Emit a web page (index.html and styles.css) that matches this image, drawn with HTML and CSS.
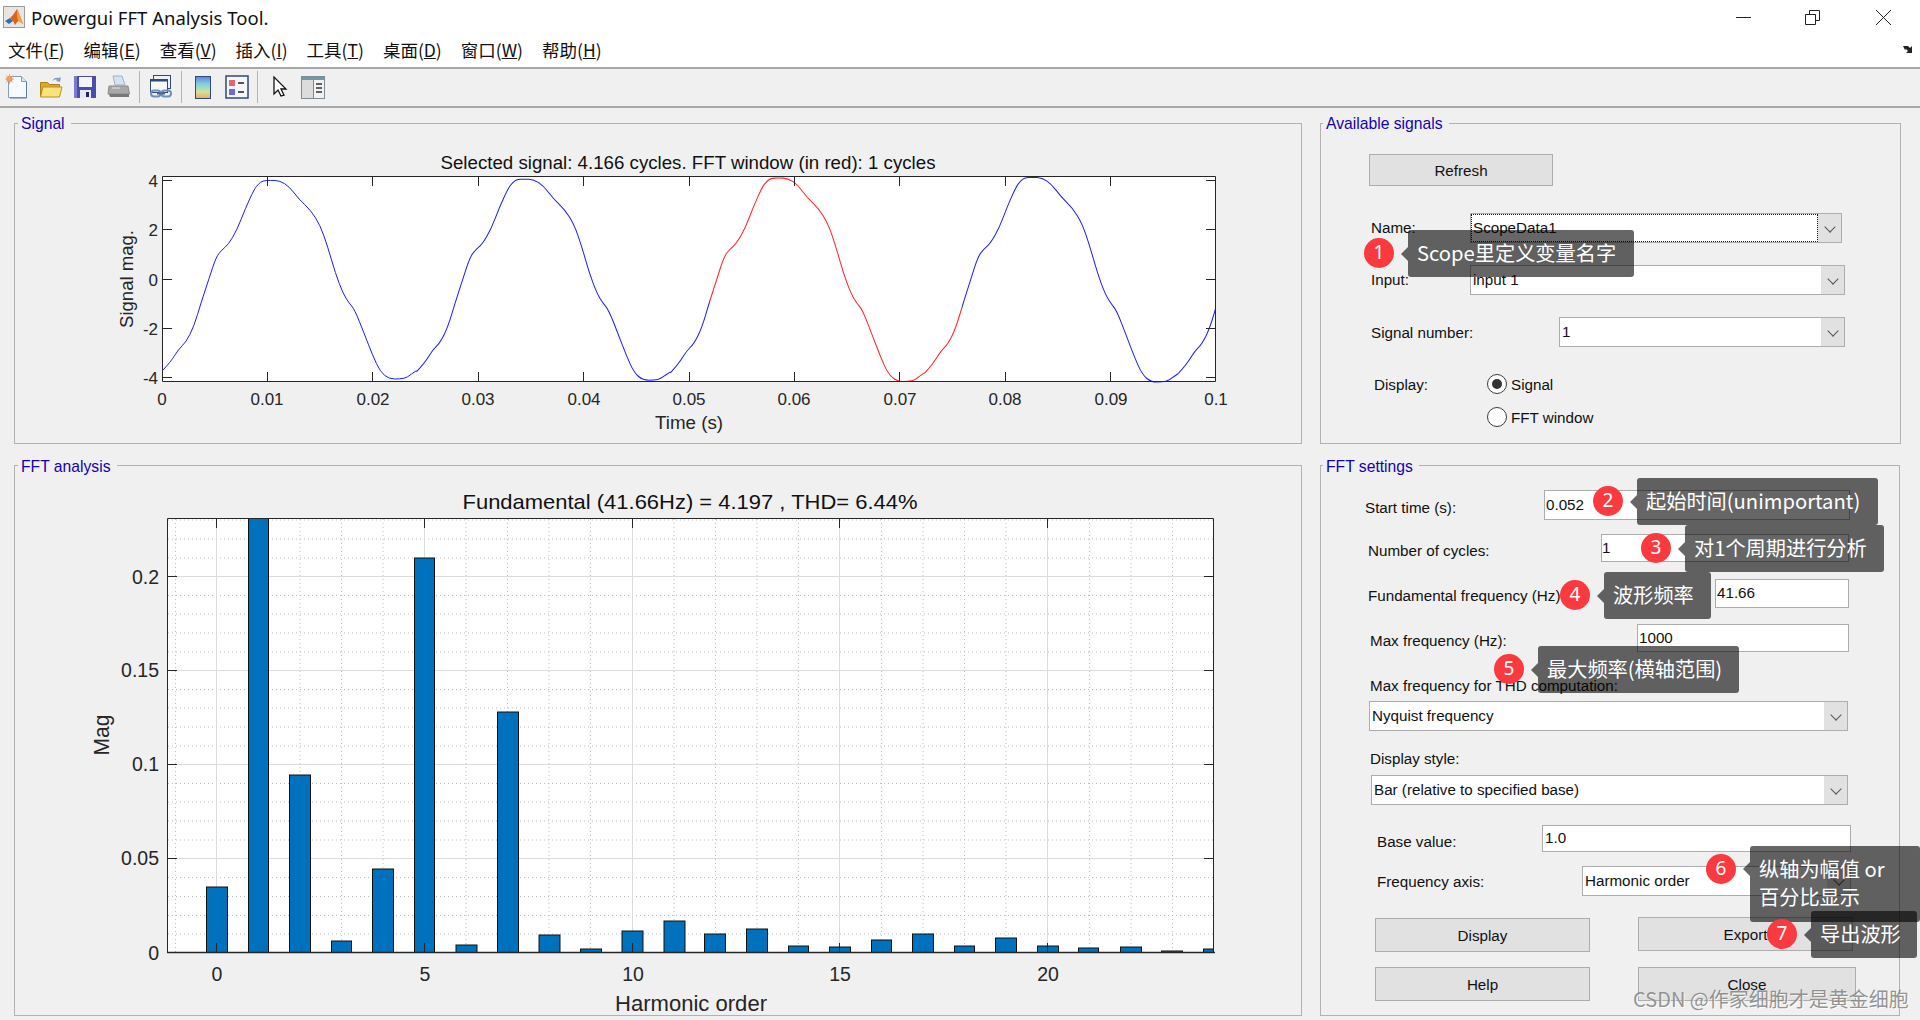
FILE: index.html
```html
<!DOCTYPE html>
<html lang="zh">
<head>
<meta charset="utf-8">
<title>Powergui FFT Analysis Tool.</title>
<link rel="stylesheet" href="styles.css">
</head>
<body>
<div class="app">
  <header class="titlebar">
    <svg class="app-icon" viewBox="0 0 22 22"><rect x="0.5" y="0.5" width="21" height="21" fill="#e6e6e6" stroke="#9a9a9a"/><path d="M2 15l5-3 3 3-4 3z" fill="#2f6db5"/><path d="M7 12l3-3 4-6c2 3 4 10 6 15-2-1-3-3-5-3-1 1-2 3-3 4-1-2-2-5-5-7z" fill="#d9641c"/><path d="M14 3c2 3 4 10 6 15-2-1-3-3-5-3-1-4-1-8-1-12z" fill="#f0a33a"/></svg>
    <span class="app-title">Powergui FFT Analysis Tool.</span>
    <div class="winbtns">
      <svg class="win-min" viewBox="0 0 15 1"><path d="M0 .5h15" stroke="#222"/></svg>
      <svg class="win-max" viewBox="0 0 15 15"><path d="M.5 4.5h10v10H.5zM4.5 4.5V.5h10v10h-4" fill="none" stroke="#222"/></svg>
      <svg class="win-close" viewBox="0 0 15 15"><path d="M0 0l15 15M15 0L0 15" stroke="#222"/></svg>
    </div>
  </header>
  <nav class="menubar">
    <span>文件(<u>F</u>)</span><span>编辑(<u>E</u>)</span><span>查看(<u>V</u>)</span><span>插入(<u>I</u>)</span><span>工具(<u>T</u>)</span><span>桌面(<u>D</u>)</span><span>窗口(<u>W</u>)</span><span>帮助(<u>H</u>)</span>
    <svg class="dock" viewBox="0 0 12 9"><path d="M1 1h5l2 2 2-2v7H4l2-2-2-2-1 1z" fill="#222"/></svg>
  </nav>
  <div class="toolbar">
    <span class="tool"><svg viewBox="0 0 24 26"><path d="M3.5 2.5h13l5 5v16h-18z" fill="#f7fbff" stroke="#7f9dc4"/><path d="M16.5 2.5v5h5" fill="#d8e6f5" stroke="#7f9dc4"/><path d="M21.5 8v16H5" fill="none" stroke="#5b7aa6"/><circle cx="4.5" cy="5" r="3" fill="#f08a3c"/><path d="M4.500 0v10M0 5h9M1 1.500l7 7M8 1.500l-7 7" stroke="#f3a36a"/></svg></span>
    <span class="tool"><svg viewBox="0 0 24 26"><path d="M1.500 8.500h7l2 2h10v12h-19z" fill="#d9a92c" stroke="#a9801a"/><path d="M1.500 23l2.500-10h19l-2.500 10z" fill="#fbe27f" stroke="#b8901f"/><path d="M13 8c1-4 4-5 7-4l2-1-1 5-4-1 1-1c-2-1-4 0-5 2z" fill="#7f9dc4"/></svg></span>
    <span class="tool"><svg viewBox="0 0 24 26"><rect x="1" y="2" width="22" height="22" fill="#4c4cb0"/><rect x="1" y="2" width="3" height="22" fill="#7a7ad0"/><rect x="6" y="3" width="13" height="10" fill="#f4f4f8"/><rect x="7" y="16" width="11" height="8" fill="#e8e8ee"/><rect x="13" y="18" width="3" height="5" fill="#23235e"/></svg></span>
    <span class="tool"><svg viewBox="0 0 24 26"><path d="M6 2h9l3 9H8z" fill="#d6e2ee" stroke="#9fb3c6"/><path d="M2 12h19l1.500 8H1z" fill="#a8a8a8" stroke="#8a8a8a"/><path d="M2 20h20v3H3z" fill="#777"/><path d="M5 14h8" stroke="#e2e2e2"/></svg></span>
    <i class="sep"></i>
    <span class="tool"><svg viewBox="0 0 24 26"><rect x="4.500" y="1.500" width="17" height="13" fill="#eef2f8" stroke="#2e4a78"/><rect x="1.500" y="5.500" width="17" height="13" fill="#f6f8fb" stroke="#2e4a78"/><path d="M1.500 6.500h17" stroke="#2e4a78" stroke-width="2"/><rect x="2" y="16.500" width="9.500" height="6" rx="3" fill="none" stroke="#6e8fb7" stroke-width="2"/><rect x="12.500" y="16.500" width="9.500" height="6" rx="3" fill="none" stroke="#6e8fb7" stroke-width="2"/><path d="M8 19.500h8" stroke="#4a6c9a" stroke-width="2"/></svg></span>
    <i class="sep"></i>
    <span class="tool"><svg viewBox="0 0 24 26"><defs><linearGradient id="cbar" x1="0" y1="0" x2="0" y2="1"><stop offset="0" stop-color="#6a7ee0"/><stop offset=".35" stop-color="#7fd4d8"/><stop offset=".7" stop-color="#cfe2a0"/><stop offset="1" stop-color="#f0a860"/></linearGradient></defs><rect x="4.500" y="2.500" width="15" height="22" fill="url(#cbar)" stroke="#2e4a78"/></svg></span>
    <span class="tool"><svg viewBox="0 0 24 26"><rect x="1" y="2" width="22" height="22" fill="#f4f6fa" stroke="#2e4a78" stroke-width="1.500"/><rect x="4" y="6" width="6" height="6" fill="#e8666a"/><rect x="4" y="15" width="6" height="6" fill="#6a6ae0"/><path d="M13 9h6M13 18h6" stroke="#222" stroke-width="1.500"/></svg></span>
    <i class="sep"></i>
    <span class="tool tool-cursor"><svg viewBox="0 0 24 26"><path d="M6 3v17l4-4 3 6 3-1-3-6h5z" fill="#fff" stroke="#111" stroke-width="1.300"/></svg></span>
    <span class="tool"><svg viewBox="0 0 24 26"><rect x="0.500" y="2.500" width="23" height="22" fill="#f2f2f2" stroke="#7e8a94"/><rect x="1" y="3" width="22" height="3" fill="#6d98ad"/><rect x="1" y="6" width="11" height="18" fill="#dcdcdc"/><path d="M12.500 6v18" stroke="#7e8a94"/><path d="M15 10h6M15 14h6M15 18h6" stroke="#333" stroke-width="1.500"/></svg></span>
  </div>

  <main class="workspace">
    <section class="panel panel-signal">
      <h2 class="panel-title">Signal</h2>
      <svg class="chart chart-signal" viewBox="100 150 1190 290">
        <defs>
          <path id="wave" d="M0 370.7Q8.4 361.7 12.25 355.5Q16.1 349.3 19.9 345.65Q23.7 342 27.55 334.35Q31.4 326.7 35.2 314.2Q39 301.7 42.85 290Q46.7 278.3 50.15 267.8Q53.6 257.3 56.45 253.65Q59.3 250 62.55 247.35Q65.8 244.7 70.2 237.35Q74.6 230 78.8 219.15Q83 208.3 87.4 198.8Q91.8 189.3 93.9 186.65Q96 184 98.15 182.35Q100.3 180.7 104.1 180.5Q107.9 180.3 112.7 180.5Q117.5 180.7 122.25 183.7Q127 186.7 131.8 193Q136.6 199.3 142.35 204.65Q148.1 210 152.9 217.5Q157.7 225 161.5 235.85Q165.3 246.7 169.15 260Q173 273.3 176.8 283.3Q180.6 293.3 183.5 298Q186.4 302.7 189.25 306Q192.1 309.3 196.9 321.3Q201.7 333.3 205.9 344.15Q210.1 355 213.95 363.35Q217.8 371.7 222.2 375.35Q226.6 379 232.3 379Q238 379 241.5 378.25Q245 377.5 248.95 374.1L254 370.7"/>
          <clipPath id="clip-blue"><rect x="162.500" y="175" width="547.500" height="208"/><rect x="962" y="175" width="254" height="208"/></clipPath>
          <clipPath id="clip-red"><rect x="710" y="175" width="252" height="208"/></clipPath>
          <g id="waves">
            <use href="#wave" transform="translate(162.400 0)"/>
            <use href="#wave" transform="translate(416.400 279) scale(1 1.012) translate(0 -279)"/>
            <use href="#wave" transform="translate(670.400 279) scale(1 1.024) translate(0 -279)"/>
            <use href="#wave" transform="translate(924.400 279) scale(1 1.03) translate(0 -279)"/>
            <use href="#wave" transform="translate(1178.400 279) scale(1 1.03) translate(0 -279)"/>
          </g>
        </defs>
        <rect class="plot-bg" x="162.500" y="176.500" width="1053" height="205"/>
        <g class="wave-blue" clip-path="url(#clip-blue)"><use href="#waves"/></g>
        <g class="wave-red" clip-path="url(#clip-red)"><use href="#waves"/></g>
        <path class="axis" d="M162.500 176.500H1215.500V381.500H162.500Z"/>
        <path class="axis" d="M267.500 177v9M372.500 177v9M478.500 177v9M583.500 177v9M689.500 177v9M794.500 177v9M899.500 177v9M1005.500 177v9M1110.500 177v9M267.500 381v-9M372.500 381v-9M478.500 381v-9M583.500 381v-9M689.500 381v-9M794.500 381v-9M899.500 381v-9M1005.500 381v-9M1110.500 381v-9M163 180.500h9M163 229.500h9M163 279.500h9M163 328.500h9M163 377.500h9M1215 180.500h-9M1215 229.500h-9M1215 279.500h-9M1215 328.500h-9M1215 377.500h-9"/>
        <text class="t-title-1 mid" x="688" y="169" textLength="495" lengthAdjust="spacingAndGlyphs">Selected signal: 4.166 cycles. FFT window (in red): 1 cycles</text>
        <g class="t-tick-1 end">
          <text x="158" y="187">4</text><text x="158" y="236">2</text><text x="158" y="286">0</text><text x="158" y="335">-2</text><text x="158" y="384">-4</text>
        </g>
        <g class="t-tick-1 mid">
          <text x="162" y="405">0</text><text x="267" y="405">0.01</text><text x="373" y="405">0.02</text><text x="478" y="405">0.03</text><text x="584" y="405">0.04</text><text x="689" y="405">0.05</text><text x="794" y="405">0.06</text><text x="900" y="405">0.07</text><text x="1005" y="405">0.08</text><text x="1111" y="405">0.09</text><text x="1216" y="405">0.1</text>
        </g>
        <text class="t-label-1 mid" x="689" y="429" textLength="68" lengthAdjust="spacingAndGlyphs">Time (s)</text>
        <text class="t-label-1 mid" transform="translate(133 279) rotate(-90)" textLength="98" lengthAdjust="spacingAndGlyphs">Signal mag.</text>
      </svg>
    </section>

    <section class="panel panel-avail">
      <h2 class="panel-title">Available signals</h2>
      <button class="btn btn-refresh">Refresh</button>
      <div class="row row-name">
        <span class="lbl lbl-name">Name:</span>
        <div class="combo combo-name"><span class="combo-text focus">ScopeData1</span><i class="drop"></i></div>
      </div>
      <div class="row row-input">
        <span class="lbl lbl-name">Input:</span>
        <div class="combo combo-input"><span class="combo-text">input 1</span><i class="drop"></i></div>
      </div>
      <div class="row row-input">
        <span class="lbl lbl-num">Signal number:</span>
        <div class="combo combo-num"><span class="combo-text">1</span><i class="drop"></i></div>
      </div>
      <div class="row row-disp">
        <span class="lbl lbl-disp">Display:</span>
        <span class="radio on"></span><span class="radio-label">Signal</span>
      </div>
      <div class="row row-fftw">
        <span class="radio"></span><span class="radio-label">FFT window</span>
      </div>
    </section>

    <section class="panel panel-fft">
      <h2 class="panel-title">FFT analysis</h2>
      <svg class="chart chart-fft" viewBox="70 480 1200 534">
        <defs><clipPath id="clip-bars"><rect x="167.500" y="519" width="1046" height="434"/></clipPath></defs>
        <rect class="plot-bg" x="167.500" y="518.500" width="1046" height="434"/>
        <path class="grid-minor" d="M168 520H1213M168 539H1213M168 558H1213M168 595.500H1213M168 614H1213M168 633H1213M168 652H1213M168 689.500H1213M168 708H1213M168 727H1213M168 746H1213M168 783.500H1213M168 802H1213M168 821H1213M168 840H1213M168 877.500H1213M168 896.500H1213M168 915.500H1213M168 934H1213"/>
        <path class="grid-minor" d="M175.500 519V952M258.500 519V952M300 519V952M341.500 519V952M383 519V952M466 519V952M507.500 519V952M549 519V952M590.500 519V952M674 519V952M715.500 519V952M757 519V952M798.500 519V952M881.500 519V952M923 519V952M964.500 519V952M1006 519V952M1089.500 519V952M1131 519V952M1172.500 519V952"/>
        <path class="grid-major" d="M168 576.500H1213M168 670.500H1213M168 764.500H1213M168 858.500H1213M216.500 519V952M424.500 519V952M632.500 519V952M839.500 519V952M1047.500 519V952"/>
        <g class="bars" clip-path="url(#clip-bars)">
          <rect x="206.500" y="887" width="21" height="66"/>
          <rect x="248.500" y="510" width="20" height="443"/>
          <rect x="289.500" y="775" width="21" height="178"/>
          <rect x="331.500" y="941" width="20" height="12"/>
          <rect x="372.500" y="869" width="21" height="84"/>
          <rect x="414.500" y="558" width="20" height="395"/>
          <rect x="456" y="945" width="21" height="8"/>
          <rect x="497.500" y="712" width="21" height="241"/>
          <rect x="539" y="935" width="21" height="18"/>
          <rect x="580.500" y="949" width="21" height="4"/>
          <rect x="622" y="931" width="21" height="22"/>
          <rect x="664" y="921" width="21" height="32"/>
          <rect x="704.500" y="934" width="21" height="19"/>
          <rect x="746.500" y="929" width="21" height="24"/>
          <rect x="788.500" y="946" width="20" height="7"/>
          <rect x="829.500" y="947" width="21" height="6"/>
          <rect x="871.500" y="940" width="20" height="13"/>
          <rect x="912.500" y="934" width="21" height="19"/>
          <rect x="954.500" y="946" width="20" height="7"/>
          <rect x="995.500" y="938" width="21" height="15"/>
          <rect x="1037.500" y="946" width="21" height="7"/>
          <rect x="1078.500" y="948" width="20" height="5"/>
          <rect x="1120.500" y="947" width="21" height="6"/>
          <rect x="1161.500" y="951" width="21" height="2"/>
          <rect x="1203.500" y="949" width="21" height="4"/>
        </g>
        <path class="axis" d="M167.500 952.500V518.500H1213.500V952.500"/>
        <path class="axis-strong" d="M167 952.500H1215"/>
        <path class="axis" d="M216.500 519v9M424.500 519v9M632.500 519v9M839.500 519v9M1047.500 519v9M216.500 952v-9M424.500 952v-9M632.500 952v-9M839.500 952v-9M1047.500 952v-9M168 576.500h9M168 670.500h9M168 764.500h9M168 858.500h9M1213 576.500h-9M1213 670.500h-9M1213 764.500h-9M1213 858.500h-9"/>
        <text class="t-title-2 mid" x="690" y="509" textLength="455" lengthAdjust="spacingAndGlyphs">Fundamental (41.66Hz) = 4.197 , THD= 6.44%</text>
        <g class="t-tick-2 end">
          <text x="159" y="584">0.2</text><text x="159" y="677">0.15</text><text x="159" y="771">0.1</text><text x="159" y="865">0.05</text><text x="159" y="960">0</text>
        </g>
        <g class="t-tick-2 mid">
          <text x="217" y="981">0</text><text x="425" y="981">5</text><text x="633" y="981">10</text><text x="840" y="981">15</text><text x="1048" y="981">20</text>
        </g>
        <text class="t-label-2 mid" x="691" y="1011" textLength="152" lengthAdjust="spacingAndGlyphs">Harmonic order</text>
        <text class="t-label-2 mid" transform="translate(109 735) rotate(-90)" textLength="41" lengthAdjust="spacingAndGlyphs">Mag</text>
      </svg>
    </section>

    <section class="panel panel-settings">
      <h2 class="panel-title">FFT settings</h2>
      <div class="row s-start"><span class="lbl low w-start">Start time (s):</span><div class="edit e-start">0.052</div></div>
      <div class="row s-cycles"><span class="lbl low w-cycles">Number of cycles:</span><div class="edit e-cycles">1</div></div>
      <div class="row s-fund"><span class="lbl w-fund">Fundamental frequency (Hz)</span><div class="edit e-fund">41.66</div></div>
      <div class="row s-maxf"><span class="lbl low w-maxf">Max frequency (Hz):</span><div class="edit e-maxf">1000</div></div>
      <div class="cap cap-thd">Max frequency for THD computation:</div>
      <div class="combo combo-nyq"><span class="combo-text">Nyquist frequency</span><i class="drop"></i></div>
      <div class="cap cap-style">Display style:</div>
      <div class="combo combo-bar"><span class="combo-text">Bar (relative to specified base)</span><i class="drop"></i></div>
      <div class="row s-base"><span class="lbl low w-base">Base value:</span><div class="edit e-base">1.0</div></div>
      <div class="row s-axis"><span class="lbl w-axis">Frequency axis:</span><div class="combo combo-axis"><span class="combo-text">Harmonic order</span><i class="drop"></i></div></div>
      <div class="btn-row btn-row-1"><button class="btn btn-wide btn-down">Display</button><button class="btn btn-wide">Export</button></div>
      <div class="btn-row btn-row-2"><button class="btn btn-wide">Help</button><button class="btn btn-close">Close</button></div>
    </section>
  </main>
</div>

<div class="callout c1">Scope里定义变量名字</div><span class="num n1">1</span>
<div class="callout c2">起始时间(unimportant)</div><span class="num n2">2</span>
<div class="callout c3">对1个周期进行分析</div><span class="num n3">3</span>
<div class="callout c4">波形频率</div><span class="num n4">4</span>
<div class="callout c5">最大频率(横轴范围)</div><span class="num n5">5</span>
<div class="callout c6">纵轴为幅值 or<br>百分比显示</div><span class="num n6">6</span>
<div class="callout c7">导出波形</div><span class="num n7">7</span>
<div class="watermark">CSDN @作家细胞才是黄金细胞</div>
</body>
</html>
```
FILE: styles.css
```css
* { box-sizing: border-box; }
html, body { margin: 0; padding: 0; }
body {
  position: relative;
  width: 1920px;
  height: 1020px;
  overflow: hidden;
  background: #f0f0f0;
  font-family: "Liberation Sans", Arial, sans-serif;
  font-size: 15.200px;
  color: #111;
}
.app { display: flex; flex-direction: column; height: 100%; }

/* window chrome */
.titlebar {
  display: flex;
  align-items: center;
  height: 34px;
  background: #fff;
  padding-left: 3px;
}
.app-icon { width: 22px; height: 22px; }
.app-title {
  margin-left: 6px;
  font-family: "Noto Sans", "Liberation Sans", sans-serif;
  font-size: 18.500px;
  color: #111;
}
.winbtns { margin-left: auto; display: flex; align-items: center; }
.win-min { width: 15px; height: 1px; margin-right: 54px; }
.win-max { width: 15px; height: 15px; margin-right: 56px; }
.win-close { width: 15px; height: 15px; margin-right: 29px; }

.menubar {
  display: flex;
  align-items: center;
  gap: 19px;
  height: 35px;
  padding: 0 0 2px 8px;
  background: #fff;
  border-bottom: 2px solid #a8a8a8;
  font-family: "Noto Sans CJK SC", "Liberation Sans", sans-serif;
  font-size: 17.500px;
  color: #111;
}
.dock { width: 12px; height: 9px; margin-left: auto; margin-right: 6px; }

.toolbar {
  display: flex;
  align-items: center;
  height: 39px;
  padding-bottom: 2px;
  border-bottom: 2px solid #a8a8a8;
  background: #f0f0f0;
}
.tool { width: 34px; display: flex; justify-content: center; }
.tool svg { width: 24px; height: 26px; display: block; }
.tool-cursor svg { margin-left: 1px; }
.sep { width: 1px; height: 32px; background: #b4b4b4; margin: 0 4px 0 3px; }

/* workspace */
.workspace {
  display: grid;
  grid-template-columns: 1288px 581px;
  grid-template-rows: 321px 551px;
  column-gap: 18px;
  row-gap: 21px;
  padding: 15px 0 0 14px;
}
.panel { position: relative; border: 1px solid #b2b2b2; }
.panel-settings { width: 580px; }
.panel-title {
  position: absolute;
  top: -9px;
  left: 3px;
  margin: 0;
  padding: 0 6px 0 3px;
  background: #f0f0f0;
  font-weight: 400;
  font-size: 15.700px;
  line-height: 18px;
  color: #1400b4;
}
.panel-avail .panel-title { left: 2px; }
.panel-fft .panel-title { top: -8px; }
.panel-settings .panel-title { top: -8px; left: 2px; }

/* charts */
.chart { display: block; overflow: visible; }
.chart-signal { width: 1190px; height: 290px; margin: 26px 0 0 85px; }
.chart-fft { width: 1200px; height: 534px; margin: 14px 0 0 55px; }
.plot-bg { fill: #fff; }
.axis { fill: none; stroke: #262626; stroke-width: 1; }
.axis-strong { fill: none; stroke: #262626; stroke-width: 1.500; }
.wave-blue { fill: none; stroke: #1a1aff; stroke-width: 1; stroke-linejoin: round; }
.wave-red { fill: none; stroke: #ff2020; stroke-width: 1; stroke-linejoin: round; }
.grid-minor { fill: none; stroke: #bdbdbd; stroke-width: 1; stroke-dasharray: 1 3; }
.grid-major { fill: none; stroke: #dcdcdc; stroke-width: 1; }
.bars rect { fill: #0072bd; stroke: #111; stroke-width: 1; }
.chart text { font-family: "Liberation Sans", Arial, sans-serif; fill: #262626; }
.mid, .mid text { text-anchor: middle; }
.end, .end text { text-anchor: end; }
.chart .t-title-1 { font-size: 18px; fill: #111; }
.t-tick-1 text { font-size: 17px; }
.chart .t-label-1 { font-size: 18px; }
.chart .t-title-2 { font-size: 21px; fill: #111; }
.t-tick-2 text { font-size: 19.500px; }
.chart .t-label-2 { font-size: 21.500px; }

/* controls */
.btn {
  display: block;
  padding: 0;
  background: #e1e1e1;
  border: 1px solid #adadad;
  border-radius: 0;
  font-family: "Liberation Sans", Arial, sans-serif;
  font-size: 15.200px;
  color: #111;
}
.btn-refresh { width: 184px; height: 32px; margin: 30px 0 0 48px; }
.row { display: flex; align-items: center; }
.lbl { display: block; flex: none; white-space: nowrap; }
.low { padding-top: 5px; }
.combo, .edit {
  display: flex;
  align-items: center;
  height: 30px;
  background: #fff;
  border: 1px solid #adadad;
  white-space: nowrap;
}
.edit { padding-left: 1px; padding-bottom: 2px; }
.combo-text { flex: 1; padding-left: 2px; height: 100%; line-height: 27px; min-width: 0; }
.focus { outline: 1px dotted #111; outline-offset: -1px; }
.drop {
  position: relative;
  flex: none;
  width: 23px;
  height: 100%;
  background: #e1e1e1;
}
.drop::after {
  content: "";
  position: absolute;
  left: 8px;
  top: 9px;
  width: 7px;
  height: 7px;
  border-right: 1px solid #555;
  border-bottom: 1px solid #555;
  transform: rotate(45deg);
}

/* Available signals */
.row-name { margin: 27px 0 0 50px; }
.row-input { margin: 22px 0 0 50px; }
.lbl-name { width: 99px; padding-bottom: 2px; }
.lbl-num { width: 188px; }
.combo-name { width: 372px; }
.combo-input { width: 375px; }
.combo-num { width: 286px; }
.row-disp { margin: 27px 0 0 53px; height: 20px; }
.row-fftw { margin: 13px 0 0 166px; height: 20px; }
.lbl-disp { width: 113px; }
.radio {
  flex: none;
  position: relative;
  width: 20px;
  height: 20px;
  background: #fff;
  border: 1px solid #3c3c3c;
  border-radius: 50%;
}
.radio.on::after {
  content: "";
  position: absolute;
  left: 4px;
  top: 4px;
  width: 10px;
  height: 10px;
  background: #333;
  border-radius: 50%;
}
.radio-label { margin-left: 4px; }

/* FFT settings */
.s-start { margin: 24px 0 0 44px; }
.s-cycles { margin: 14px 0 0 47px; }
.s-fund { margin: 17px 0 0 47px; }
.s-maxf { margin: 16px 0 0 49px; }
.s-base { margin: 20px 0 0 56px; }
.s-axis { margin: 14px 0 0 56px; }
.w-start { width: 179px; }
.w-cycles { width: 233px; }
.w-fund { width: 347px; padding-top: 3px; }
.w-maxf { width: 267px; }
.w-base { width: 165px; }
.w-axis { width: 205px; }
.e-start { width: 306px; }
.e-cycles { width: 248px; height: 28px; padding-left: 0; }
.e-fund { width: 134px; height: 29px; }
.e-maxf { width: 212px; height: 28px; }
.e-base { width: 309px; height: 27px; padding-left: 2px; }
.combo-axis { width: 269px; }
.cap { line-height: 18px; }
.cap-thd { margin: 25px 0 0 49px; }
.cap-style { margin: 19px 0 0 49px; }
.combo-nyq { width: 479px; margin: 6px 0 0 48px; }
.combo-bar { width: 477px; margin: 7px 0 0 50px; }
.btn-row { display: flex; align-items: flex-start; gap: 48px; margin-left: 54px; }
.btn-row-1 { margin-top: 21px; height: 35px; }
.btn-row-2 { margin-top: 15px; }
.btn-wide { width: 215px; height: 34px; }
.btn-down { margin-top: 1px; }
.btn-close { width: 218px; height: 34px; }

/* annotation overlays */
.callout {
  position: absolute;
  display: flex;
  align-items: center;
  padding: 0 0 2px 9px;
  height: 47px;
  background: rgba(0, 0, 0, 0.6);
  border-radius: 3px;
  color: #fff;
  font-family: "Noto Sans CJK SC", "Noto Sans", sans-serif;
  font-size: 20.200px;
  line-height: 28px;
  white-space: nowrap;
}
.callout::before {
  content: "";
  position: absolute;
  left: -7px;
  top: 50%;
  margin-top: -7px;
  border-style: solid;
  border-width: 7px 7px 7px 0;
  border-color: transparent rgba(0, 0, 0, 0.6) transparent transparent;
}
.c1 { left: 1408px; top: 230px; width: 226px; }
.c2 { left: 1637px; top: 478px; width: 241px; }
.c3 { left: 1685px; top: 525px; width: 199px; }
.c4 { left: 1604px; top: 572px; width: 107px; }
.c5 { left: 1538px; top: 646px; width: 201px; }
.c6 { left: 1750px; top: 846px; width: 170px; height: 76px; }
.c6::before { top: 16px; margin-top: 0; }
.c7 { left: 1811px; top: 911px; width: 106px; }
.num {
  position: absolute;
  width: 30px;
  height: 30px;
  border-radius: 50%;
  background: #fb3a3f;
  color: #fff;
  font-family: "Noto Sans", "Liberation Sans", sans-serif;
  font-size: 19px;
  line-height: 29px;
  text-align: center;
}
.n1 { left: 1364px; top: 238px; }
.n2 { left: 1593px; top: 486px; }
.n3 { left: 1641px; top: 533px; }
.n4 { left: 1560px; top: 580px; }
.n5 { left: 1494px; top: 654px; }
.n6 { left: 1706px; top: 854px; }
.n7 { left: 1767px; top: 919px; }
.watermark {
  position: absolute;
  left: 1633px;
  top: 985px;
  font-family: "Noto Sans CJK SC", "Noto Sans", sans-serif;
  font-size: 20px;
  line-height: 28px;
  white-space: nowrap;
  color: rgba(130, 130, 130, 0.85);
  text-shadow: 1px 1px 0 rgba(255, 255, 255, 0.7);
}
```
